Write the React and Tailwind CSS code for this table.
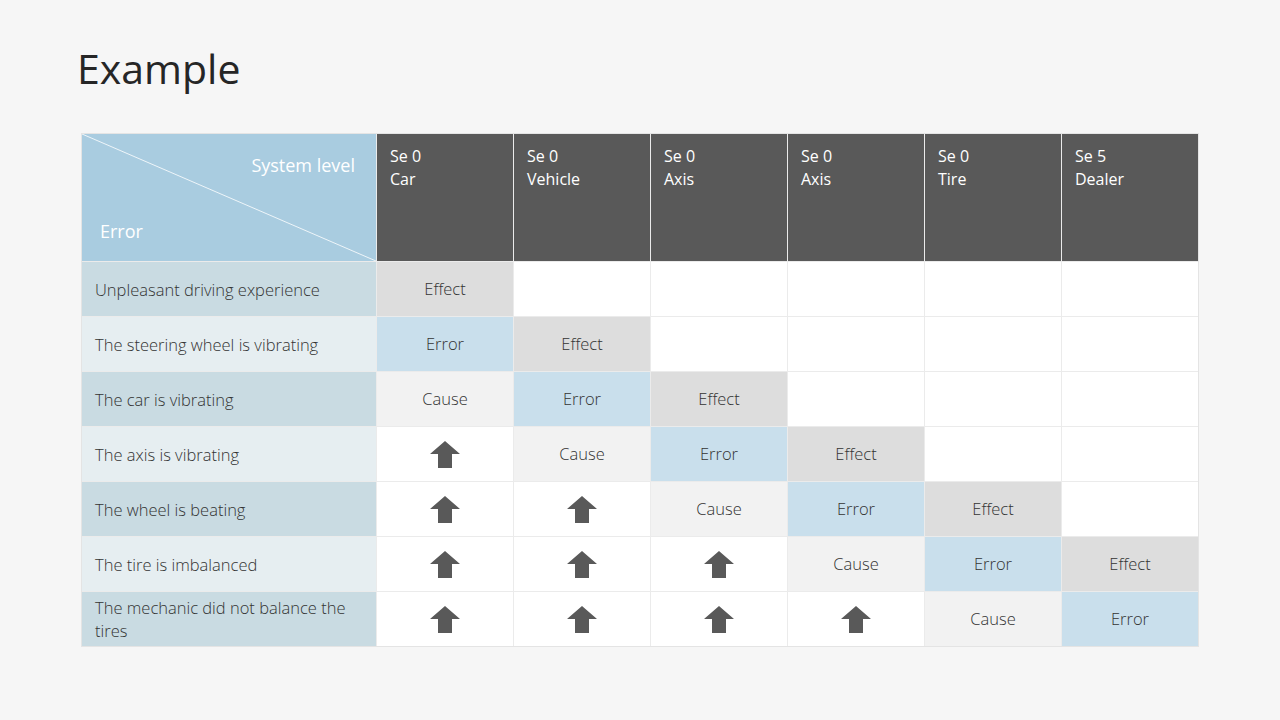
import React from 'react';

const columns = [
    ['Se 0', 'Car'],
    ['Se 0', 'Vehicle'],
    ['Se 0', 'Axis'],
    ['Se 0', 'Axis'],
    ['Se 0', 'Tire'],
    ['Se 5', 'Dealer'],
];

const rows = [
    'Unpleasant driving experience',
    'The steering wheel is vibrating',
    'The car is vibrating',
    'The axis is vibrating',
    'The wheel is beating',
    'The tire is imbalanced',
    'The mechanic did not balance the tires',
];

const cellStyles = {
    Effect: 'bg-[#dddddd]',
    Error: 'bg-[#c9dfec]',
    Cause: 'bg-[#f2f2f2]',
};

// row r, col c -> what goes in the cell
const cellFor = (r, c) => {
    if (c === r) return 'Effect';
    if (c === r - 1) return 'Error';
    if (c === r - 2) return 'Cause';
    if (c < r - 2) return 'arrow';
    return null;
};

const UpArrow = () => (
    <svg width="30" height="27" viewBox="0 0 30 27">
        <path d="M15 0 L30 13 L22 13 L22 27 L8 27 L8 13 L0 13 Z" fill="#595959" />
    </svg>
);

const App = () => {
    return (
        <div className="w-[1280px] h-[720px] bg-[#f6f6f6] font-['Open_Sans',sans-serif] text-[#333333]">
            <h1 className="pl-[77px] pt-[41px] text-[41px] leading-[55px] text-[#262626]">
                Example
            </h1>

            <div className="mt-[37px] ml-[81px] w-[1118px] grid grid-cols-[294px_repeat(6,136px)] gap-px bg-[#ebebeb] border border-[#e4e4e4]">
                <div className="relative h-[127px] bg-[#a9cce0] text-white text-[18px]">
                    <svg className="absolute inset-0" width="294" height="127" viewBox="0 0 294 127">
                        <line x1="0" y1="0" x2="294" y2="127" stroke="#eef5f9" strokeWidth="1" />
                    </svg>
                    <div className="absolute right-[21px] top-[18px]">System level</div>
                    <div className="absolute left-[18px] top-[84px]">Error</div>
                </div>
                {columns.map(([a, b], i) => (
                    <div key={i} className="h-[127px] bg-[#595959] text-white text-[16px] leading-[23px] pl-[13px] pt-[11px]">
                        <div>{a}</div>
                        <div>{b}</div>
                    </div>
                ))}

                {rows.map((label, r) => (
                    <React.Fragment key={r}>
                        <div className={`h-[54px] flex items-center pl-[13px] pr-4 text-[16.5px] leading-[23px] font-light ${r % 2 === 0 ? 'bg-[#c9dbe2]' : 'bg-[#e6eef1]'}`}>
                            {label}
                        </div>
                        {columns.map((_, c) => {
                            const v = cellFor(r, c);
                            return (
                                <div
                                    key={c}
                                    className={`h-[54px] flex items-center justify-center text-[16.5px] font-light ${v && cellStyles[v] ? cellStyles[v] : 'bg-white'}`}
                                >
                                    {v === 'arrow' ? <UpArrow /> : v}
                                </div>
                            );
                        })}
                    </React.Fragment>
                ))}
            </div>
        </div>
    );
};

export default App;
